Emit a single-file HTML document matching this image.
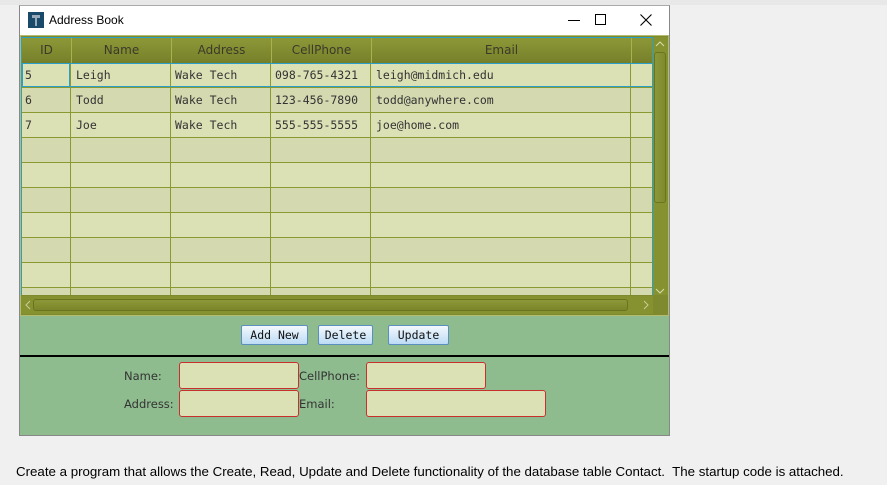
<!DOCTYPE html>
<html><head><meta charset="utf-8"><style>
*{margin:0;padding:0;box-sizing:border-box}
body{width:887px;height:485px;background:#f0f0f0;position:relative;overflow:hidden;font-family:"Liberation Sans",sans-serif}
.a{position:absolute}
.win{left:19px;top:5px;width:651px;height:431px;border:1px solid #888;border-top:1px solid #aaa;background:#8fbc8f}
.title{left:0;top:0;width:649px;height:29px;background:#fff;font-size:12px;color:#000}
.mono{font-family:"DejaVu Sans Mono","Liberation Mono",monospace;font-size:11.5px;color:#333}
.hdr{background:linear-gradient(#8c9838,#76802a);color:#3a3a2a;font-family:"DejaVu Sans",sans-serif;font-size:12px;text-align:center;line-height:24px;border-right:1px solid #a9b24c}
.btn{height:20px;border:1px solid #5a8fc0;border-radius:2px;background:linear-gradient(#f2f8fd,#bcdcf5);font-family:"DejaVu Sans Mono",monospace;font-size:11.5px;text-align:center;line-height:18px;color:#111}
.inp{height:27px;border:1px solid #c8302e;border-radius:3px;background:#dbe0b5}
.lbl{font-family:"DejaVu Sans",sans-serif;font-size:11.5px;color:#333}
</style></head><body>
<div class="a" style="left:0;top:0;width:887px;height:5px;background:#e8e8e8"></div>
<div class="a win">
 <div class="a title">
  <div class="a" style="left:8px;top:6px;width:16px;height:16px;background:#1a4a6a"><div class="a" style="left:7px;top:3px;width:2px;height:11px;background:#9ab"></div><div class="a" style="left:4px;top:3px;width:8px;height:3px;background:#9ab"></div></div>
  <div class="a" style="left:29px;top:7px">Address Book</div>
  <div class="a" style="left:548px;top:14px;width:12px;height:1px;background:#000"></div>
  <div class="a" style="left:575px;top:8px;width:11px;height:11px;border:1px solid #000"></div>
  <svg class="a" style="left:620px;top:8px" width="12" height="12"><path d="M0.5 0.5L11.5 11.5M11.5 0.5L0.5 11.5" stroke="#000" stroke-width="1.1"/></svg>
 </div>
 <div class="a" style="left:0;top:29px;width:649px;height:281px;background:#7f8a2e;border:1px solid #b5bc70"></div>
 <div class="a" style="left:1px;top:31px;width:632px;height:258px;border:1px solid #2aa0c8;overflow:hidden;background:#dbe0b5">
  <div class="a hdr" style="left:0;top:0;width:50px;height:25px">ID</div>
  <div class="a hdr" style="left:50px;top:0;width:100px;height:25px">Name</div>
  <div class="a hdr" style="left:150px;top:0;width:100px;height:25px">Address</div>
  <div class="a hdr" style="left:250px;top:0;width:100px;height:25px">CellPhone</div>
  <div class="a hdr" style="left:350px;top:0;width:260px;height:25px">Email</div>
  <div class="a hdr" style="left:610px;top:0;width:22px;height:25px"></div>
 </div>
 <div class="a mono" style="left:2px;top:57px;width:630px;height:232px;overflow:hidden">
  <div class="a" style="left:0;top:0;width:630px;height:25px;background:#dbe0b5"></div>
  <div class="a" style="left:0;top:25px;width:630px;height:25px;background:#d4d9b0"></div>
  <div class="a" style="left:0;top:50px;width:630px;height:25px;background:#dbe0b5"></div>
  <div class="a" style="left:0;top:75px;width:630px;height:25px;background:#d4d9b0"></div>
  <div class="a" style="left:0;top:100px;width:630px;height:25px;background:#dbe0b5"></div>
  <div class="a" style="left:0;top:125px;width:630px;height:25px;background:#d4d9b0"></div>
  <div class="a" style="left:0;top:150px;width:630px;height:25px;background:#dbe0b5"></div>
  <div class="a" style="left:0;top:175px;width:630px;height:25px;background:#d4d9b0"></div>
  <div class="a" style="left:0;top:200px;width:630px;height:25px;background:#dbe0b5"></div>
  <div class="a" style="left:0;top:225px;width:630px;height:25px;background:#d4d9b0"></div>
  <div class="a" style="left:48px;top:0;width:1px;height:240px;background:#8a9a30"></div>
  <div class="a" style="left:148px;top:0;width:1px;height:240px;background:#8a9a30"></div>
  <div class="a" style="left:248px;top:0;width:1px;height:240px;background:#8a9a30"></div>
  <div class="a" style="left:348px;top:0;width:1px;height:240px;background:#8a9a30"></div>
  <div class="a" style="left:608px;top:0;width:1px;height:240px;background:#8a9a30"></div>
  <div class="a" style="left:0;top:24px;width:630px;height:1px;background:#8a9a30"></div>
  <div class="a" style="left:0;top:49px;width:630px;height:1px;background:#8a9a30"></div>
  <div class="a" style="left:0;top:74px;width:630px;height:1px;background:#8a9a30"></div>
  <div class="a" style="left:0;top:99px;width:630px;height:1px;background:#8a9a30"></div>
  <div class="a" style="left:0;top:124px;width:630px;height:1px;background:#8a9a30"></div>
  <div class="a" style="left:0;top:149px;width:630px;height:1px;background:#8a9a30"></div>
  <div class="a" style="left:0;top:174px;width:630px;height:1px;background:#8a9a30"></div>
  <div class="a" style="left:0;top:199px;width:630px;height:1px;background:#8a9a30"></div>
  <div class="a" style="left:0;top:224px;width:630px;height:1px;background:#8a9a30"></div>
  <div class="a" style="left:0;top:0;width:630px;height:24px;border:1px solid #2aa0c8;border-left:none;border-right:none"></div>
  <div class="a" style="left:0;top:0;width:48px;height:24px;border:1px solid #2aa0c8"></div>
  <div class="a" style="left:3px;top:5px">5</div><div class="a" style="left:54px;top:5px">Leigh</div><div class="a" style="left:153px;top:5px">Wake Tech</div><div class="a" style="left:253px;top:5px">098-765-4321</div><div class="a" style="left:354px;top:5px">leigh@midmich.edu</div>
  <div class="a" style="left:3px;top:30px">6</div><div class="a" style="left:54px;top:30px">Todd</div><div class="a" style="left:153px;top:30px">Wake Tech</div><div class="a" style="left:253px;top:30px">123-456-7890</div><div class="a" style="left:354px;top:30px">todd@anywhere.com</div>
  <div class="a" style="left:3px;top:55px">7</div><div class="a" style="left:54px;top:55px">Joe</div><div class="a" style="left:153px;top:55px">Wake Tech</div><div class="a" style="left:253px;top:55px">555-555-5555</div><div class="a" style="left:354px;top:55px">joe@home.com</div>
 </div>
 <div class="a" style="left:633px;top:31px;width:15px;height:258px;background:#86922f"></div>
 <svg class="a" style="left:635px;top:34px" width="10" height="8"><path d="M1 6L5 2L9 6" stroke="#d8dcaa" fill="none"/></svg>
 <div class="a" style="left:634px;top:46px;width:12px;height:151px;border:1px solid #6a7420;border-radius:3px;background:linear-gradient(90deg,#8c9838,#7e8a2c)"></div>
 <svg class="a" style="left:635px;top:281px" width="10" height="8"><path d="M1 2L5 6L9 2" stroke="#d8dcaa" fill="none"/></svg>
 <div class="a" style="left:1px;top:290px;width:632px;height:18px;background:#86922f"></div>
 <svg class="a" style="left:4px;top:294px" width="8" height="10"><path d="M6 1L2 5L6 9" stroke="#c8cc9a" fill="none"/></svg>
 <div class="a" style="left:13px;top:293px;width:595px;height:12px;border:1px solid #6a7420;border-radius:3px;background:linear-gradient(#8c9838,#7a8629)"></div>
 <svg class="a" style="left:622px;top:294px" width="8" height="10"><path d="M2 1L6 5L2 9" stroke="#c8cc9a" fill="none"/></svg>
 <div class="a btn" style="left:221px;top:319px;width:67px">Add New</div>
 <div class="a btn" style="left:298px;top:319px;width:55px">Delete</div>
 <div class="a btn" style="left:368px;top:319px;width:61px">Update</div>
 <div class="a" style="left:0;top:349px;width:649px;height:2px;background:#000"></div>
 <div class="a lbl" style="left:104px;top:363px">Name:</div>
 <div class="a inp" style="left:159px;top:356px;width:120px"></div>
 <div class="a lbl" style="left:279px;top:363px">CellPhone:</div>
 <div class="a inp" style="left:346px;top:356px;width:120px"></div>
 <div class="a lbl" style="left:104px;top:391px">Address:</div>
 <div class="a inp" style="left:159px;top:384px;width:120px"></div>
 <div class="a lbl" style="left:279px;top:391px">Email:</div>
 <div class="a inp" style="left:346px;top:384px;width:180px"></div>
</div>
<div class="a" style="left:16px;top:464px;font-size:13.3px;color:#000">Create a program that allows the Create, Read, Update and Delete functionality of the database table Contact.&nbsp; The startup code is attached.</div>
</body></html>
